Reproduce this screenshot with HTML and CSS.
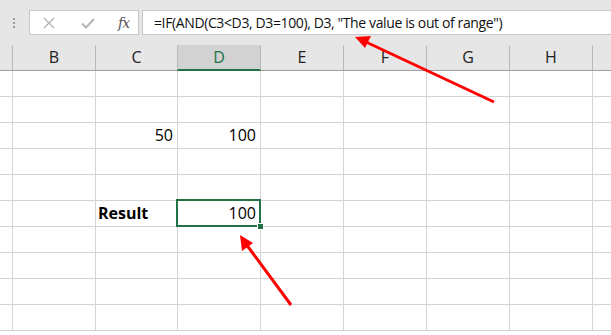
FILE: index.html
```html
<!DOCTYPE html>
<html>
<head>
<meta charset="utf-8">
<link rel="stylesheet" href="styles.css">
</head>
<body>
<div class="app">
  <div class="fbar">
    <div class="grip"><span></span><span></span><span></span></div>
    <div class="namebox">
      <svg class="ico" width="14" height="14" viewBox="0 0 14 14"><path d="M2 2 L12 12 M12 2 L2 12" stroke="#b4b4b4" stroke-width="1.4" fill="none"/></svg>
      <svg class="ico" width="16" height="14" viewBox="0 0 16 14"><path d="M2 7.5 L6 11.5 L14 3" stroke="#b4b4b4" stroke-width="2" fill="none"/></svg>
      <span class="fx">fx</span>
    </div>
    <div class="formula">=IF(AND(C3&lt;D3, D3=100), D3, "The value is out of range")</div>
  </div>
  <div class="sheet">
    <div class="row head">
      <div class="c rh"></div>
      <div class="c w83">B</div>
      <div class="c w82">C</div>
      <div class="c w83 sel">D</div>
      <div class="c w83">E</div>
      <div class="c w83">F</div>
      <div class="c w83">G</div>
      <div class="c w83">H</div>
      <div class="c rest"></div>
    </div>
    <div class="row"><div class="c rh"></div><div class="c w83"></div><div class="c w82"></div><div class="c w83"></div><div class="c w83"></div><div class="c w83"></div><div class="c w83"></div><div class="c w83"></div><div class="c rest"></div></div>
    <div class="row"><div class="c rh"></div><div class="c w83"></div><div class="c w82"></div><div class="c w83"></div><div class="c w83"></div><div class="c w83"></div><div class="c w83"></div><div class="c w83"></div><div class="c rest"></div></div>
    <div class="row"><div class="c rh"></div><div class="c w83"></div><div class="c w82 num">50</div><div class="c w83 num">100</div><div class="c w83"></div><div class="c w83"></div><div class="c w83"></div><div class="c w83"></div><div class="c rest"></div></div>
    <div class="row"><div class="c rh"></div><div class="c w83"></div><div class="c w82"></div><div class="c w83"></div><div class="c w83"></div><div class="c w83"></div><div class="c w83"></div><div class="c w83"></div><div class="c rest"></div></div>
    <div class="row"><div class="c rh"></div><div class="c w83"></div><div class="c w82"></div><div class="c w83"></div><div class="c w83"></div><div class="c w83"></div><div class="c w83"></div><div class="c w83"></div><div class="c rest"></div></div>
    <div class="row"><div class="c rh"></div><div class="c w83"></div><div class="c w82 bold">Result</div><div class="c w83 num active">100</div><div class="c w83"></div><div class="c w83"></div><div class="c w83"></div><div class="c w83"></div><div class="c rest"></div></div>
    <div class="row"><div class="c rh"></div><div class="c w83"></div><div class="c w82"></div><div class="c w83"></div><div class="c w83"></div><div class="c w83"></div><div class="c w83"></div><div class="c w83"></div><div class="c rest"></div></div>
    <div class="row"><div class="c rh"></div><div class="c w83"></div><div class="c w82"></div><div class="c w83"></div><div class="c w83"></div><div class="c w83"></div><div class="c w83"></div><div class="c w83"></div><div class="c rest"></div></div>
    <div class="row"><div class="c rh"></div><div class="c w83"></div><div class="c w82"></div><div class="c w83"></div><div class="c w83"></div><div class="c w83"></div><div class="c w83"></div><div class="c w83"></div><div class="c rest"></div></div>
    <div class="row"><div class="c rh"></div><div class="c w83"></div><div class="c w82"></div><div class="c w83"></div><div class="c w83"></div><div class="c w83"></div><div class="c w83"></div><div class="c w83"></div><div class="c rest"></div></div>
  </div>
  <svg class="arrows" width="611" height="335" viewBox="0 0 611 335">
    <line x1="494" y1="102" x2="366" y2="42" stroke="#ff0000" stroke-width="3"/>
    <polygon points="355,37 371,36 365,48" fill="#ff0000"/>
    <line x1="291" y1="305" x2="246" y2="244" stroke="#ff0000" stroke-width="3"/>
    <polygon points="240,235 253,243 242,251" fill="#ff0000"/>
  </svg>
</div>
</body>
</html>
```
FILE: styles.css
```css
html, body {
  margin: 0;
  padding: 0;
  background: #ffffff;
}
.app {
  position: relative;
  width: 611px;
  height: 335px;
  overflow: hidden;
  font-family: "Open Sans", "Liberation Sans", sans-serif;
}
.fbar {
  height: 45px;
  background: #e6e6e6;
  display: flex;
  align-items: flex-start;
  padding-top: 10px;
  box-sizing: border-box;
}
.grip {
  width: 29px;
  height: 25px;
  display: flex;
  flex-direction: column;
  align-items: center;
  justify-content: center;
  gap: 2px;
  padding-right: 2px;
  box-sizing: border-box;
}
.grip span {
  width: 2px;
  height: 2px;
  background: #9a9a9a;
}
.namebox {
  width: 110px;
  height: 25px;
  box-sizing: border-box;
  background: #ffffff;
  border: 1px solid #c6c6c6;
  display: flex;
  align-items: center;
  padding-left: 12px;
  gap: 24px;
}
.ico {
  display: block;
}
.fx {
  font-family: "DejaVu Serif", "Liberation Serif", serif;
  font-style: italic;
  font-size: 14px;
  color: #555555;
  margin-left: -2px;
  letter-spacing: -1px;
}
.formula {
  margin-left: 3px;
  flex: 1;
  height: 25px;
  box-sizing: border-box;
  background: #ffffff;
  border: 1px solid #c6c6c6;
  border-right: none;
  padding-left: 11px;
  font-size: 14px;
  letter-spacing: -0.38px;
  line-height: 23px;
  color: #111111;
  white-space: nowrap;
}
.sheet {
  display: flex;
  flex-direction: column;
}
.row {
  display: flex;
  height: 26px;
}
.c {
  box-sizing: border-box;
  height: 26px;
  border-right: 1px solid #d4d4d4;
  border-bottom: 1px solid #d4d4d4;
  font-size: 16px;
  line-height: 25px;
  color: #000000;
  white-space: nowrap;
  position: relative;
}
.rh { width: 13px; }
.w83 { width: 83px; }
.w82 { width: 82px; }
.rest { flex: 1; border-right: none; }
.head {
  height: 26px;
}
.head .c {
  background: #e6e6e6;
  border-right: 1px solid #b8b8b8;
  border-bottom: 1px solid #9e9e9e;
  text-align: center;
  color: #222222;
  border-top: 1px solid #e6e6e6;
  line-height: 23px;
  font-size: 16px;
}
.head .rh {
  border-right: 1px solid #b8b8b8;
}
.head .rest {
  border-right: none;
}
.head .sel {
  background: #d2d2d2;
  color: #217346;
  border-top-color: #d2d2d2;
  border-bottom: 2px solid #217346;
  border-left: 1px solid #b8b8b8;
  margin-left: -1px;
  width: 84px;
}
.num {
  text-align: right;
  padding-right: 4px;
}
.bold {
  font-weight: bold;
  padding-left: 2px;
}
.active::after {
  content: "";
  position: absolute;
  left: -2px;
  top: -2px;
  right: -1px;
  bottom: -1px;
  border: 2px solid #217346;
}
.active::before {
  content: "";
  position: absolute;
  right: -4px;
  bottom: -4px;
  width: 5px;
  height: 5px;
  background: #217346;
  border: 1px solid #ffffff;
  z-index: 2;
}
.arrows {
  position: absolute;
  left: 0;
  top: 0;
  pointer-events: none;
}
```
